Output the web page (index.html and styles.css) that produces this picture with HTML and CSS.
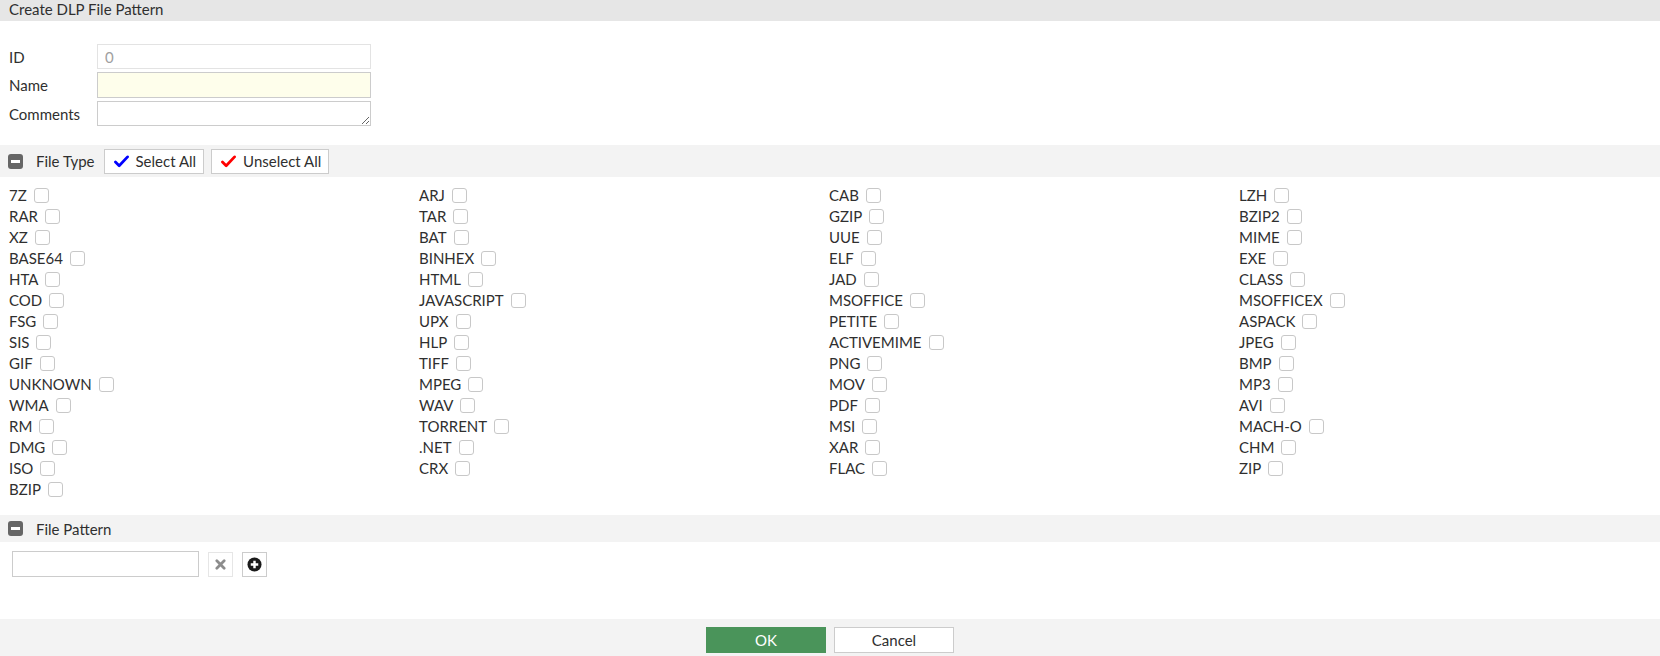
FILE: index.html
```html
<!DOCTYPE html>
<html>
<head>
<meta charset="utf-8">
<title>Create DLP File Pattern</title>
<link rel="stylesheet" href="styles.css">
</head>
<body>
<div class="page">
  <div class="titlebar">Create DLP File Pattern</div>
  <div class="form">
    <div class="form-row">
      <label class="form-label">ID</label>
      <input class="text-input readonly" type="text" value="0" readonly>
    </div>
    <div class="form-row">
      <label class="form-label">Name</label>
      <input class="text-input required" type="text" value="">
    </div>
    <div class="form-row">
      <label class="form-label">Comments</label>
      <textarea class="text-input textarea"></textarea>
    </div>
  </div>

  <div class="section-bar tall">
    <span class="collapse-icon"></span>
    <span class="section-title">File Type</span>
    <button class="tool-btn"><svg class="check" viewBox="0 0 16 14" width="15" height="13"><path d="M1.5 7.5 L5.5 11.5 L14.5 2" fill="none" stroke="#0000ff" stroke-width="3" stroke-linecap="round" stroke-linejoin="round"/></svg>Select All</button>
    <button class="tool-btn"><svg class="check" viewBox="0 0 16 14" width="15" height="13"><path d="M1.5 7.5 L5.5 11.5 L14.5 2" fill="none" stroke="#ff0000" stroke-width="3" stroke-linecap="round" stroke-linejoin="round"/></svg>Unselect All</button>
  </div>

  <div class="types">
    <div class="type-col">
      <label class="type-item">7Z<span class="cb"></span></label>
      <label class="type-item">RAR<span class="cb"></span></label>
      <label class="type-item">XZ<span class="cb"></span></label>
      <label class="type-item">BASE64<span class="cb"></span></label>
      <label class="type-item">HTA<span class="cb"></span></label>
      <label class="type-item">COD<span class="cb"></span></label>
      <label class="type-item">FSG<span class="cb"></span></label>
      <label class="type-item">SIS<span class="cb"></span></label>
      <label class="type-item">GIF<span class="cb"></span></label>
      <label class="type-item">UNKNOWN<span class="cb"></span></label>
      <label class="type-item">WMA<span class="cb"></span></label>
      <label class="type-item">RM<span class="cb"></span></label>
      <label class="type-item">DMG<span class="cb"></span></label>
      <label class="type-item">ISO<span class="cb"></span></label>
      <label class="type-item">BZIP<span class="cb"></span></label>
    </div>
    <div class="type-col">
      <label class="type-item">ARJ<span class="cb"></span></label>
      <label class="type-item">TAR<span class="cb"></span></label>
      <label class="type-item">BAT<span class="cb"></span></label>
      <label class="type-item">BINHEX<span class="cb"></span></label>
      <label class="type-item">HTML<span class="cb"></span></label>
      <label class="type-item">JAVASCRIPT<span class="cb"></span></label>
      <label class="type-item">UPX<span class="cb"></span></label>
      <label class="type-item">HLP<span class="cb"></span></label>
      <label class="type-item">TIFF<span class="cb"></span></label>
      <label class="type-item">MPEG<span class="cb"></span></label>
      <label class="type-item">WAV<span class="cb"></span></label>
      <label class="type-item">TORRENT<span class="cb"></span></label>
      <label class="type-item">.NET<span class="cb"></span></label>
      <label class="type-item">CRX<span class="cb"></span></label>
    </div>
    <div class="type-col">
      <label class="type-item">CAB<span class="cb"></span></label>
      <label class="type-item">GZIP<span class="cb"></span></label>
      <label class="type-item">UUE<span class="cb"></span></label>
      <label class="type-item">ELF<span class="cb"></span></label>
      <label class="type-item">JAD<span class="cb"></span></label>
      <label class="type-item">MSOFFICE<span class="cb"></span></label>
      <label class="type-item">PETITE<span class="cb"></span></label>
      <label class="type-item">ACTIVEMIME<span class="cb"></span></label>
      <label class="type-item">PNG<span class="cb"></span></label>
      <label class="type-item">MOV<span class="cb"></span></label>
      <label class="type-item">PDF<span class="cb"></span></label>
      <label class="type-item">MSI<span class="cb"></span></label>
      <label class="type-item">XAR<span class="cb"></span></label>
      <label class="type-item">FLAC<span class="cb"></span></label>
    </div>
    <div class="type-col">
      <label class="type-item">LZH<span class="cb"></span></label>
      <label class="type-item">BZIP2<span class="cb"></span></label>
      <label class="type-item">MIME<span class="cb"></span></label>
      <label class="type-item">EXE<span class="cb"></span></label>
      <label class="type-item">CLASS<span class="cb"></span></label>
      <label class="type-item">MSOFFICEX<span class="cb"></span></label>
      <label class="type-item">ASPACK<span class="cb"></span></label>
      <label class="type-item">JPEG<span class="cb"></span></label>
      <label class="type-item">BMP<span class="cb"></span></label>
      <label class="type-item">MP3<span class="cb"></span></label>
      <label class="type-item">AVI<span class="cb"></span></label>
      <label class="type-item">MACH-O<span class="cb"></span></label>
      <label class="type-item">CHM<span class="cb"></span></label>
      <label class="type-item">ZIP<span class="cb"></span></label>
    </div>
  </div>

  <div class="section-bar">
    <span class="collapse-icon"></span>
    <span class="section-title">File Pattern</span>
  </div>

  <div class="pattern-row">
    <input class="text-input pattern-input" type="text">
    <button class="icon-btn remove"><svg viewBox="0 0 12 12" width="11" height="11"><path d="M2 2 L10 10 M10 2 L2 10" stroke="#8c8c8c" stroke-width="3" stroke-linecap="round"/></svg></button>
    <button class="icon-btn add"><svg viewBox="0 0 16 16" width="15" height="15"><circle cx="8" cy="8" r="7.5" fill="#1a1a1a"/><path d="M8 4 V12 M4 8 H12" stroke="#fff" stroke-width="2.6"/></svg></button>
  </div>

  <div class="footer">
    <button class="btn primary">OK</button>
    <button class="btn">Cancel</button>
  </div>
</div>
</body>
</html>
```

FILE: styles.css
```css
* { box-sizing: border-box; }
html, body {
  margin: 0;
  padding: 0;
  background: #ffffff;
}
body {
  font-family: Lato, "Open Sans", "Liberation Sans", sans-serif;
  font-size: 15px;
  color: #2f2f2f;
  width: 1660px;
  height: 656px;
  overflow: hidden;
}
.page {
  display: flex;
  flex-direction: column;
  height: 656px;
}
.titlebar {
  height: 21px;
  line-height: 19px;
  background: #e6e6e6;
  padding-left: 9px;
  font-size: 15px;
}
.form {
  display: flex;
  flex-direction: column;
  gap: 3px;
  padding: 23px 0 0 9px;
}
.form-row {
  display: flex;
  align-items: center;
}
.form-label {
  width: 88px;
}
.text-input {
  width: 274px;
  height: 26px;
  border: 1px solid #cccccc;
  background: #fff;
  font-family: inherit;
  font-size: 15px;
  padding: 0 7px;
  color: #333;
  outline: none;
  margin: 0;
}
.text-input.readonly {
  border-color: #e3e3e3;
  color: #a0a0a0;
  height: 25px;
}
.text-input.required {
  background: #fefeeb;
}
.textarea {
  resize: vertical;
  display: block;
  height: 25px;
}
.section-bar {
  display: flex;
  align-items: center;
  background: #f3f3f3;
  height: 27px;
  padding-left: 8px;
}
.section-bar.tall {
  margin-top: 19px;
  height: 32px;
}
.collapse-icon {
  width: 15px;
  height: 15px;
  border-radius: 3px;
  background: #666666;
  position: relative;
  flex: none;
}
.collapse-icon::after {
  content: "";
  position: absolute;
  left: 3px;
  right: 3px;
  top: 6px;
  height: 3px;
  background: #fff;
}
.section-title {
  margin-left: 13px;
  margin-right: 9px;
}
.tool-btn {
  display: flex;
  align-items: center;
  gap: 7px;
  height: 25px;
  padding: 0 7px 0 9px;
  background: #fff;
  border: 1px solid #cccccc;
  font-family: inherit;
  font-size: 15px;
  color: #2f2f2f;
  margin-right: 7px;
}
.types {
  display: grid;
  grid-template-columns: repeat(4, 1fr);
  padding: 8px 11px 0 9px;
  height: 338px;
}
.type-col {
  display: flex;
  flex-direction: column;
}
.type-item {
  display: flex;
  align-items: center;
  height: 20px;
  margin-bottom: 1px;
}
.cb {
  width: 15px;
  height: 15px;
  border: 1px solid #c8c8c8;
  border-radius: 3px;
  margin-left: 7px;
  background: #fff;
}
.pattern-row {
  display: flex;
  align-items: center;
  gap: 9px;
  padding: 9px 0 0 12px;
}
.pattern-input {
  width: 187px;
  height: 26px;
}
.icon-btn {
  width: 25px;
  height: 25px;
  border: 1px solid #cccccc;
  background: #fff;
  padding: 0;
  display: flex;
  align-items: center;
  justify-content: center;
}
.icon-btn.remove {
  border-color: #e6e6e6;
}
.footer {
  margin-top: auto;
  height: 37px;
  background: #f3f3f3;
  display: flex;
  justify-content: center;
  align-items: flex-start;
  gap: 8px;
  padding-top: 8px;
}
.btn {
  width: 120px;
  height: 26px;
  border: 1px solid #cccccc;
  background: #fff;
  font-family: inherit;
  font-size: 15px;
  color: #2f2f2f;
  padding: 0;
}
.btn.primary {
  background: #4a945a;
  border-color: #4a945a;
  color: #fff;
}
```
